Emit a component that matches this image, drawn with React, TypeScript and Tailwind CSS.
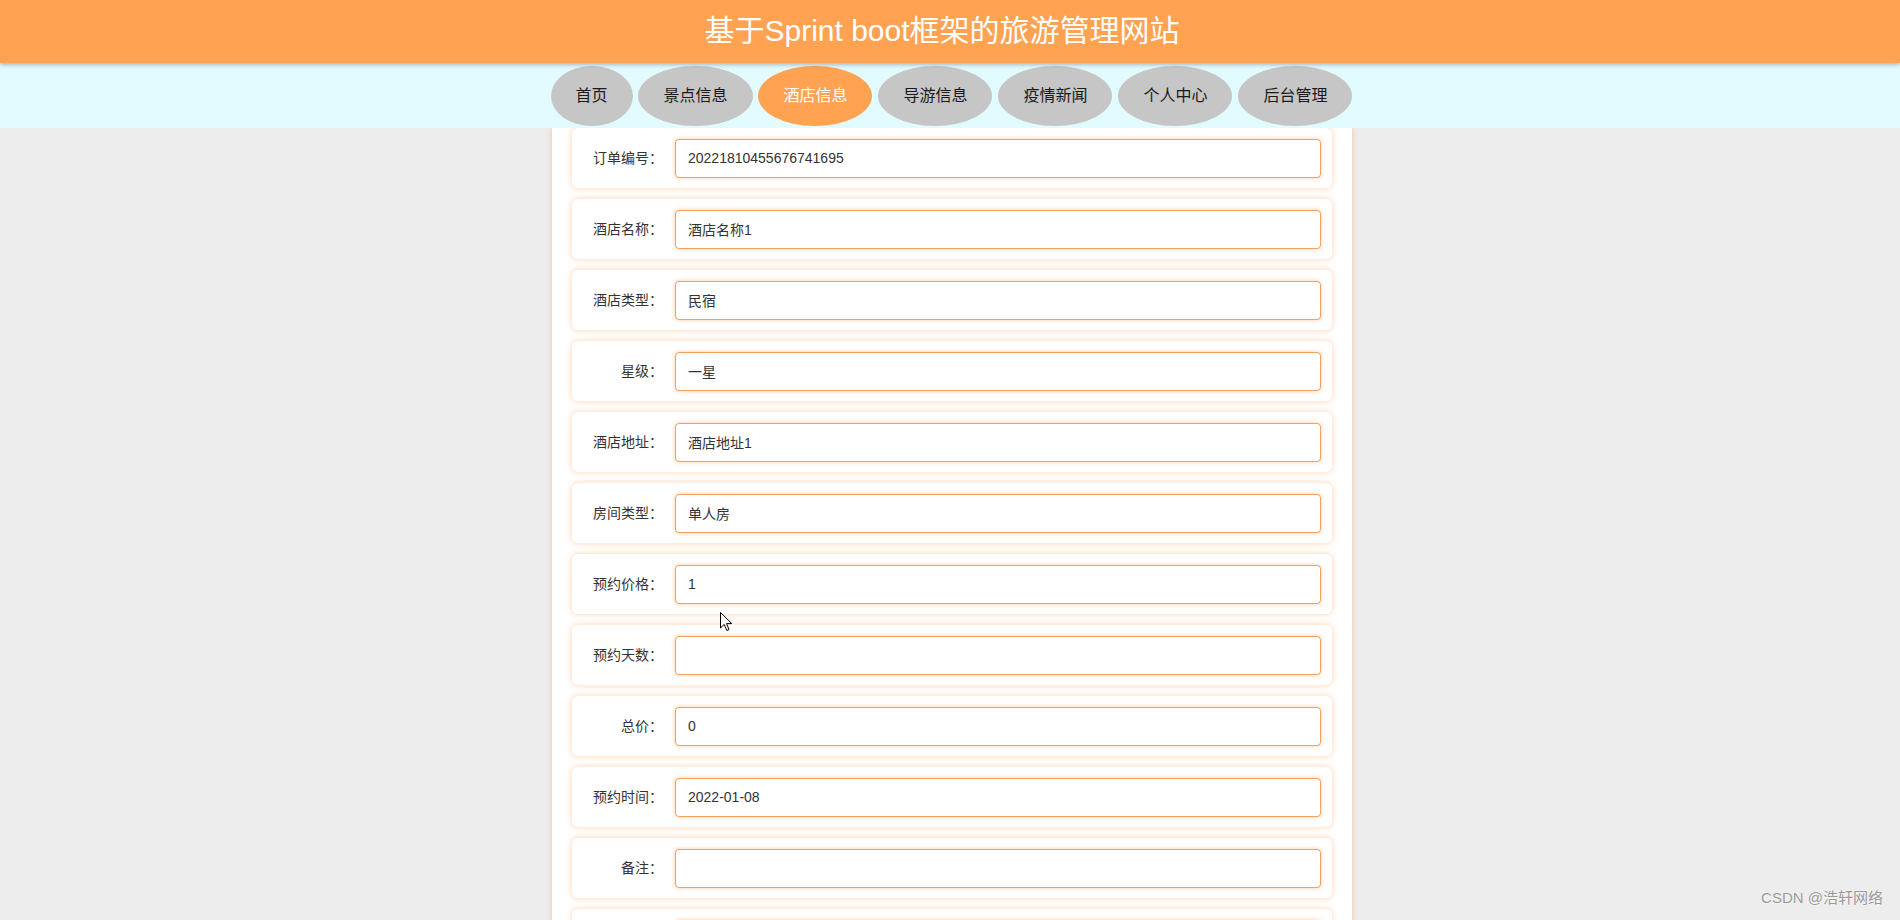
const navItems = ['首页', '景点信息', '酒店信息', '导游信息', '疫情新闻', '个人中心', '后台管理']

const fields = [
  { label: '订单编号：', value: '20221810455676741695' },
  { label: '酒店名称：', value: '酒店名称1' },
  { label: '酒店类型：', value: '民宿' },
  { label: '星级：', value: '一星' },
  { label: '酒店地址：', value: '酒店地址1' },
  { label: '房间类型：', value: '单人房' },
  { label: '预约价格：', value: '1' },
  { label: '预约天数：', value: '' },
  { label: '总价：', value: '0' },
  { label: '预约时间：', value: '2022-01-08' },
  { label: '备注：', value: '' },
  { label: '', value: '' },
]

const font = "font-['Liberation_Sans','Noto_Sans_CJK_SC',sans-serif]"

function FormRow({ label, value }: { label: string; value: string }) {
  return (
    <div className="flex items-center h-[60px] mb-[11px] bg-white rounded-[6px] shadow-[0_0_6px_rgba(255,150,70,0.45)]">
      <label className="w-[91px] text-right text-[14px] text-[#333] shrink-0">{label}</label>
      <input
        readOnly
        value={value}
        className="ml-[12px] w-[646px] h-[39px] px-[12px] text-[14px] text-[#333] bg-white border border-[#f0a25e] rounded-[4px] outline-none shadow-[0_0_4px_rgba(255,140,40,0.45)]"
      />
    </div>
  )
}

export default function App() {
  return (
    <div className={`relative h-[920px] overflow-hidden bg-[#ededed] ${font}`}>
      {/* header */}
      <div className="relative z-20 h-[63px] bg-[#ffa352] flex items-center justify-center pr-[16px] shadow-[0_2px_4px_rgba(0,0,0,0.25)]">
        <h1 className="text-[30px] text-white leading-none -mt-[2px]">基于Sprint boot框架的旅游管理网站</h1>
      </div>

      {/* nav */}
      <div className="relative z-10 h-[65px] bg-[#e2fbff] pt-[3px] pl-[3px]">
        <div className="w-[802px] mx-auto flex justify-between">
          {navItems.map((item) => (
            <div
              key={item}
              className={
                item === '酒店信息'
                  ? 'h-[60px] px-[25px] rounded-[50%] flex items-center bg-[#ffa352] text-white text-[16px]'
                  : 'h-[60px] px-[25px] rounded-[50%] flex items-center bg-[#c6c6c6] text-[#1a1a1a] text-[16px]'
              }
            >
              {item}
            </div>
          ))}
        </div>
      </div>

      {/* content */}
      <div className="h-full pl-[4px]">
        <div className="w-[800px] mx-auto bg-white px-[20px] h-full shadow-[0_0_6px_rgba(255,150,70,0.45)]">
          {fields.map((f, i) => (
            <FormRow key={i} label={f.label} value={f.value} />
          ))}
        </div>
      </div>

      {/* cursor */}
      <svg className="absolute left-[720px] top-[612px] z-30" width="13" height="20" viewBox="0 0 13 20">
        <path d="M0.5 0.5 L0.5 16 L4.2 12.4 L6.8 18.5 L9 17.5 L6.5 11.6 L11.8 11.6 Z" fill="white" stroke="black" strokeWidth="1" strokeLinejoin="round" />
      </svg>

      {/* watermark */}
      <div className="absolute right-[17px] bottom-[11px] z-30 text-[15px] text-[#9a9a9a] [text-shadow:0_0_2px_white]">
        CSDN @浩轩网络
      </div>
    </div>
  )
}
